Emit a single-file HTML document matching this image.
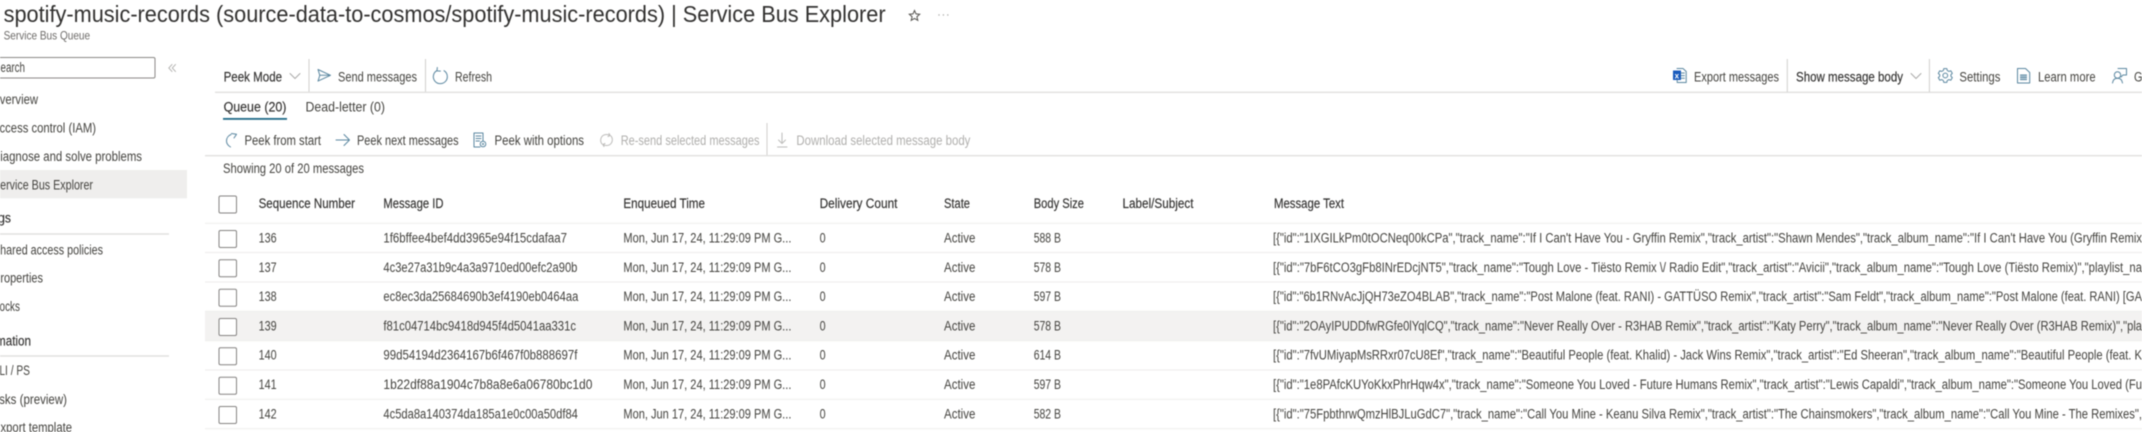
<!DOCTYPE html>
<html lang="en">
<head>
<meta charset="utf-8">
<title>Service Bus Explorer</title>
<style>
html,body{margin:0;padding:0;background:#fff;width:2142px;height:432px;overflow:hidden}
svg{display:block;position:absolute;left:0;top:0;filter:blur(.4px)}
text{font-family:"Liberation Sans",sans-serif;font-size:13.5px;fill:#44433f;white-space:pre}
.t{font-size:23px;fill:#323130}
.s{font-size:12px;fill:#6d6b69}
.h{fill:#323130;stroke:#323130;stroke-width:.15}
.d{fill:#b0afad}
.c{fill:#fff;stroke:#858382;stroke-width:1}
.l{stroke:#e1e0df;stroke-width:1.4;fill:none}
.r{stroke:#f0efee;stroke-width:1.2;fill:none}
.sep{stroke:#d0cfcd;stroke-width:1;fill:none}
.i{fill:none;stroke:#5b87a0;stroke-width:1;stroke-linecap:round;stroke-linejoin:round}
.g{fill:none;stroke:#bdbcba;stroke-width:1;stroke-linecap:round;stroke-linejoin:round}
.v{fill:none;stroke:#a8a7a5;stroke-width:.9;stroke-linecap:round;stroke-linejoin:round}
</style>
</head>
<body>
<svg xmlns="http://www.w3.org/2000/svg" width="2142" height="432" viewBox="0 0 2142 432">
<rect width="2142" height="432" fill="#fff"/>

<!-- Header -->
<text class="t" x="3.6" y="22" textLength="882" lengthAdjust="spacingAndGlyphs">spotify-music-records (source-data-to-cosmos/spotify-music-records) | Service Bus Explorer</text>
<text class="s" x="3.6" y="39.5" textLength="86.5" lengthAdjust="spacingAndGlyphs">Service Bus Queue</text>
<path d="M914.5 10.5l1.5 3.4 3.7.4-2.8 2.4.9 3.6-3.3-1.9-3.3 1.9.9-3.6-2.8-2.4 3.7-.4z" fill="none" stroke="#55534f" stroke-width="1"/>
<g fill="#a8a7a5"><circle cx="939" cy="15" r=".7"/><circle cx="943.4" cy="15" r=".7"/><circle cx="947.8" cy="15" r=".7"/></g>

<!-- Sidebar -->
<rect x="-3" y="57.5" width="158" height="20.5" rx="1.5" fill="#fff" stroke="#8a8886" stroke-width="1"/>
<text x="-6" y="72" textLength="31" lengthAdjust="spacingAndGlyphs">Search</text>
<path class="v" d="M172 64.5l-3.2 3.5 3.2 3.5M175.500 64.500l-3.200 3.500 3.200 3.500"/>
<rect x="0" y="170" width="187" height="28.3" fill="#efeeed"/>
<text x="-9" y="104" textLength="47" lengthAdjust="spacingAndGlyphs">Overview</text>
<text x="-8" y="132.500" textLength="104" lengthAdjust="spacingAndGlyphs">Access control (IAM)</text>
<text x="-8" y="161" textLength="150" lengthAdjust="spacingAndGlyphs">Diagnose and solve problems</text>
<text x="-7" y="189.500" textLength="100" lengthAdjust="spacingAndGlyphs">Service Bus Explorer</text>
<text class="h" x="-33" y="222.500" textLength="44" lengthAdjust="spacingAndGlyphs">Settings</text>
<line class="l" x1="0" y1="234" x2="169" y2="234"/>
<text x="-7" y="254.500" textLength="110" lengthAdjust="spacingAndGlyphs">Shared access policies</text>
<text x="-7" y="282.500" textLength="50" lengthAdjust="spacingAndGlyphs">Properties</text>
<text x="-6" y="311" textLength="26" lengthAdjust="spacingAndGlyphs">Locks</text>
<text class="h" x="-28" y="345.500" textLength="59" lengthAdjust="spacingAndGlyphs">Automation</text>
<line class="l" x1="0" y1="356" x2="169" y2="356"/>
<text x="-8" y="375" textLength="38" lengthAdjust="spacingAndGlyphs">CLI / PS</text>
<text x="-13" y="404" textLength="80" lengthAdjust="spacingAndGlyphs">Tasks (preview)</text>
<text x="-7" y="432" textLength="79" lengthAdjust="spacingAndGlyphs">Export template</text>

<!-- Top command bar -->
<text x="223.600" y="81.500" textLength="58.500" lengthAdjust="spacingAndGlyphs" class="h">Peek Mode</text>
<path class="v" d="M290 73.500l5 5 5-5"/>
<line class="sep" x1="309" y1="59" x2="309" y2="92"/>
<path class="i" d="M318 69.500l12.500 5.800-12.500 5.800 1.800-5.800zM319.800 75.300h10.700"/>
<text x="338" y="81.500" textLength="79" lengthAdjust="spacingAndGlyphs">Send messages</text>
<line class="sep" x1="425.500" y1="59" x2="425.500" y2="92"/>
<path class="i" d="M437 70.500a7 7 0 1 0 7 .2M437.300 67.500l-.3 3.400 3.400.2"/>
<text x="455" y="81.500" textLength="37" lengthAdjust="spacingAndGlyphs">Refresh</text>
<line class="l" x1="215" y1="92.300" x2="2142" y2="92.300"/>

<rect x="1673" y="70.500" width="8" height="9.500" fill="#185abd"/>
<text x="1674.600" y="78.600" style="font-size:8px;font-weight:bold;fill:#fff">x</text>
<path class="i" d="M1677 68.500h6l3.200 3v11h-9v-2.500M1681 73h3.400M1681 75.600h3.400M1681 78.200h3.400"/>
<text x="1694" y="81.500" textLength="85" lengthAdjust="spacingAndGlyphs">Export messages</text>
<line class="sep" x1="1787.300" y1="59" x2="1787.300" y2="92"/>
<text class="h" x="1796" y="81.500" textLength="107" lengthAdjust="spacingAndGlyphs">Show message body</text>
<path class="v" d="M1911 73.500l5 5 5-5"/>
<line class="sep" x1="1929.400" y1="59" x2="1929.400" y2="92"/>
<circle class="i" cx="1945.300" cy="75.500" r="2.400"/>
<path class="i" d="M1943.800 68.600h3l.5 1.900 1.600.9 1.900-.6 1.500 2.600-1.400 1.300v1.600l1.400 1.300-1.500 2.600-1.900-.6-1.600.9-.5 1.900h-3l-.5-1.900-1.600-.9-1.900.6-1.500-2.600 1.400-1.300v-1.600l-1.400-1.300 1.500-2.600 1.900.6 1.600-.9z"/>
<text x="1959.400" y="81.500" textLength="41" lengthAdjust="spacingAndGlyphs">Settings</text>
<rect x="2020" y="74.500" width="7" height="5.500" fill="#b9cdd9"/>
<path class="i" d="M2017.500 68.500h8l4.200 4v10.500h-12.200zM2020.500 75h6M2020.500 77.300h6M2020.500 79.600h6"/>
<text x="2038" y="81.500" textLength="57.600" lengthAdjust="spacingAndGlyphs">Learn more</text>
<circle class="i" cx="2117.500" cy="75" r="3.200"/>
<path class="i" d="M2112.500 83c.4-3.200 2.200-4.800 5-4.800s4.600 1.600 5 4.800M2118 68.500h8.500v6.500h-3.500l-2 2"/>
<text x="2134" y="81.500" textLength="70" lengthAdjust="spacingAndGlyphs">Give feedback</text>

<!-- Tabs -->
<text class="h" x="223.600" y="111.500" textLength="62.800" lengthAdjust="spacingAndGlyphs">Queue (20)</text>
<text x="305.500" y="111.500" textLength="79.500" lengthAdjust="spacingAndGlyphs">Dead-letter (0)</text>
<rect x="223" y="118" width="64" height="1.800" fill="#1f6a88"/>

<!-- Secondary command bar -->
<path class="i" d="M231 134.500a7 7 0 0 0-4.500 6.500c0 2.500 1.500 4.500 4 6M231.500 133.500l5 .8-2.500 3.700"/>
<text x="244.500" y="145.200" textLength="76.500" lengthAdjust="spacingAndGlyphs">Peek from start</text>
<path class="i" d="M336 140h13.500M344 134.500l5.500 5.500-5.500 5.500"/>
<text x="357" y="145.200" textLength="101.600" lengthAdjust="spacingAndGlyphs">Peek next messages</text>
<path class="i" d="M474 133h9v8M474 133v14h6M476 136h5M476 138.500h5M476 141h3.500"/>
<circle class="i" cx="483" cy="144" r="2.800"/>
<circle cx="483" cy="144" r="1" fill="#5b87a0"/>
<text x="494.500" y="145.200" textLength="89.500" lengthAdjust="spacingAndGlyphs">Peek with options</text>
<path class="g" d="M602 144a6 6 0 0 1 1-8.500c2-1.400 5-1.400 7 0M611 136a6 6 0 0 1-1 8.500c-2 1.400-5 1.400-7 0M609 133.500l1.200 2-2.200 1M604 146.500l-1.200-2 2.200-1"/>
<text class="d" x="620.700" y="145.200" textLength="138.800" lengthAdjust="spacingAndGlyphs">Re-send selected messages</text>
<line class="sep" x1="767" y1="123" x2="767" y2="155"/>
<path class="g" d="M782 133v10.500M778.500 140l3.500 3.500 3.500-3.500M777.500 147h9.500"/>
<text class="d" x="796.400" y="145.200" textLength="174" lengthAdjust="spacingAndGlyphs">Download selected message body</text>
<line class="l" x1="205" y1="155.700" x2="2142" y2="155.700"/>

<text x="223" y="173" textLength="141" lengthAdjust="spacingAndGlyphs">Showing 20 of 20 messages</text>

<!-- Table header -->
<rect class="c" x="219" y="196" width="17.500" height="17" rx="1.500"/>
<text class="h" x="258.600" y="208" textLength="96.400" lengthAdjust="spacingAndGlyphs">Sequence Number</text>
<text class="h" x="383.400" y="208" textLength="60.100" lengthAdjust="spacingAndGlyphs">Message ID</text>
<text class="h" x="623.400" y="208" textLength="81.600" lengthAdjust="spacingAndGlyphs">Enqueued Time</text>
<text class="h" x="819.600" y="208" textLength="77.900" lengthAdjust="spacingAndGlyphs">Delivery Count</text>
<text class="h" x="944" y="208" textLength="26" lengthAdjust="spacingAndGlyphs">State</text>
<text class="h" x="1033.700" y="208" textLength="50.300" lengthAdjust="spacingAndGlyphs">Body Size</text>
<text class="h" x="1122.500" y="208" textLength="71" lengthAdjust="spacingAndGlyphs">Label/Subject</text>
<text class="h" x="1274" y="208" textLength="70" lengthAdjust="spacingAndGlyphs">Message Text</text>

<!-- Rows -->
<rect x="205" y="311.500" width="1937" height="29" fill="#f3f2f1"/>
<line class="r" x1="205" y1="223.300" x2="2142" y2="223.300"/>
<line class="r" x1="205" y1="252.500" x2="2142" y2="252.500"/>
<line class="r" x1="205" y1="282" x2="2142" y2="282"/>
<line class="r" x1="205" y1="311.300" x2="2142" y2="311.300"/>
<line class="r" x1="205" y1="340.700" x2="2142" y2="340.700"/>
<line class="r" x1="205" y1="370" x2="2142" y2="370"/>
<line class="r" x1="205" y1="399.300" x2="2142" y2="399.300"/>
<line class="r" x1="205" y1="428.700" x2="2142" y2="428.700"/>

<rect class="c" x="219" y="230.500" width="17.500" height="17" rx="1.500"/>
<text x="258.600" y="242.500" textLength="18" lengthAdjust="spacingAndGlyphs">136</text>
<text x="383.400" y="242.500" textLength="183.600" lengthAdjust="spacingAndGlyphs">1f6bffee4bef4dd3965e94f15cdafaa7</text>
<text x="623.400" y="242.500" textLength="168" lengthAdjust="spacingAndGlyphs">Mon, Jun 17, 24, 11:29:09 PM G...</text>
<text x="819.600" y="242.500" textLength="6" lengthAdjust="spacingAndGlyphs">0</text>
<text x="944" y="242.500" textLength="31.400" lengthAdjust="spacingAndGlyphs">Active</text>
<text x="1033.700" y="242.500" textLength="27.300" lengthAdjust="spacingAndGlyphs">588 B</text>
<text x="1273" y="242.500" textLength="869" lengthAdjust="spacingAndGlyphs">[{"id":"1IXGILkPm0tOCNeq00kCPa","track_name":"If I Can't Have You - Gryffin Remix","track_artist":"Shawn Mendes","track_album_name":"If I Can't Have You (Gryffin Remix</text>

<rect class="c" x="219" y="259.800" width="17.500" height="17" rx="1.500"/>
<text x="258.600" y="271.800" textLength="18" lengthAdjust="spacingAndGlyphs">137</text>
<text x="383.400" y="271.800" textLength="194" lengthAdjust="spacingAndGlyphs">4c3e27a31b9c4a3a9710ed00efc2a90b</text>
<text x="623.400" y="271.800" textLength="168" lengthAdjust="spacingAndGlyphs">Mon, Jun 17, 24, 11:29:09 PM G...</text>
<text x="819.600" y="271.800" textLength="6" lengthAdjust="spacingAndGlyphs">0</text>
<text x="944" y="271.800" textLength="31.400" lengthAdjust="spacingAndGlyphs">Active</text>
<text x="1033.700" y="271.800" textLength="27.300" lengthAdjust="spacingAndGlyphs">578 B</text>
<text x="1273" y="271.800" textLength="869" lengthAdjust="spacingAndGlyphs">[{"id":"7bF6tCO3gFb8INrEDcjNT5","track_name":"Tough Love - Tiësto Remix \/ Radio Edit","track_artist":"Avicii","track_album_name":"Tough Love (Tiësto Remix)","playlist_na</text>

<rect class="c" x="219" y="289.200" width="17.500" height="17" rx="1.500"/>
<text x="258.600" y="301.100" textLength="18" lengthAdjust="spacingAndGlyphs">138</text>
<text x="383.400" y="301.100" textLength="194.900" lengthAdjust="spacingAndGlyphs">ec8ec3da25684690b3ef4190eb0464aa</text>
<text x="623.400" y="301.100" textLength="168" lengthAdjust="spacingAndGlyphs">Mon, Jun 17, 24, 11:29:09 PM G...</text>
<text x="819.600" y="301.100" textLength="6" lengthAdjust="spacingAndGlyphs">0</text>
<text x="944" y="301.100" textLength="31.400" lengthAdjust="spacingAndGlyphs">Active</text>
<text x="1033.700" y="301.100" textLength="27.300" lengthAdjust="spacingAndGlyphs">597 B</text>
<text x="1273" y="301.100" textLength="869" lengthAdjust="spacingAndGlyphs">[{"id":"6b1RNvAcJjQH73eZO4BLAB","track_name":"Post Malone (feat. RANI) - GATTÜSO Remix","track_artist":"Sam Feldt","track_album_name":"Post Malone (feat. RANI) [GA</text>

<rect class="c" x="219" y="318.500" width="17.500" height="17" rx="1.500"/>
<text x="258.600" y="330.400" textLength="18" lengthAdjust="spacingAndGlyphs">139</text>
<text x="383.400" y="330.400" textLength="192.600" lengthAdjust="spacingAndGlyphs">f81c04714bc9418d945f4d5041aa331c</text>
<text x="623.400" y="330.400" textLength="168" lengthAdjust="spacingAndGlyphs">Mon, Jun 17, 24, 11:29:09 PM G...</text>
<text x="819.600" y="330.400" textLength="6" lengthAdjust="spacingAndGlyphs">0</text>
<text x="944" y="330.400" textLength="31.400" lengthAdjust="spacingAndGlyphs">Active</text>
<text x="1033.700" y="330.400" textLength="27.300" lengthAdjust="spacingAndGlyphs">578 B</text>
<text x="1273" y="330.400" textLength="869" lengthAdjust="spacingAndGlyphs">[{"id":"2OAyIPUDDfwRGfe0lYqlCQ","track_name":"Never Really Over - R3HAB Remix","track_artist":"Katy Perry","track_album_name":"Never Really Over (R3HAB Remix)","pla</text>

<rect class="c" x="219" y="347.800" width="17.500" height="17" rx="1.500"/>
<text x="258.600" y="359.700" textLength="18" lengthAdjust="spacingAndGlyphs">140</text>
<text x="383.400" y="359.700" textLength="194" lengthAdjust="spacingAndGlyphs">99d54194d2364167b6f467f0b888697f</text>
<text x="623.400" y="359.700" textLength="168" lengthAdjust="spacingAndGlyphs">Mon, Jun 17, 24, 11:29:09 PM G...</text>
<text x="819.600" y="359.700" textLength="6" lengthAdjust="spacingAndGlyphs">0</text>
<text x="944" y="359.700" textLength="31.400" lengthAdjust="spacingAndGlyphs">Active</text>
<text x="1033.700" y="359.700" textLength="27.300" lengthAdjust="spacingAndGlyphs">614 B</text>
<text x="1273" y="359.700" textLength="869" lengthAdjust="spacingAndGlyphs">[{"id":"7fvUMiyapMsRRxr07cU8Ef","track_name":"Beautiful People (feat. Khalid) - Jack Wins Remix","track_artist":"Ed Sheeran","track_album_name":"Beautiful People (feat. K</text>

<rect class="c" x="219" y="377.200" width="17.500" height="17" rx="1.500"/>
<text x="258.600" y="389" textLength="18" lengthAdjust="spacingAndGlyphs">141</text>
<text x="383.400" y="389" textLength="209" lengthAdjust="spacingAndGlyphs">1b22df88a1904c7b8a8e6a06780bc1d0</text>
<text x="623.400" y="389" textLength="168" lengthAdjust="spacingAndGlyphs">Mon, Jun 17, 24, 11:29:09 PM G...</text>
<text x="819.600" y="389" textLength="6" lengthAdjust="spacingAndGlyphs">0</text>
<text x="944" y="389" textLength="31.400" lengthAdjust="spacingAndGlyphs">Active</text>
<text x="1033.700" y="389" textLength="27.300" lengthAdjust="spacingAndGlyphs">597 B</text>
<text x="1273" y="389" textLength="869" lengthAdjust="spacingAndGlyphs">[{"id":"1e8PAfcKUYoKkxPhrHqw4x","track_name":"Someone You Loved - Future Humans Remix","track_artist":"Lewis Capaldi","track_album_name":"Someone You Loved (Fu</text>

<rect class="c" x="219" y="406.500" width="17.500" height="17" rx="1.500"/>
<text x="258.600" y="418.300" textLength="18" lengthAdjust="spacingAndGlyphs">142</text>
<text x="383.400" y="418.300" textLength="194.500" lengthAdjust="spacingAndGlyphs">4c5da8a140374da185a1e0c00a50df84</text>
<text x="623.400" y="418.300" textLength="168" lengthAdjust="spacingAndGlyphs">Mon, Jun 17, 24, 11:29:09 PM G...</text>
<text x="819.600" y="418.300" textLength="6" lengthAdjust="spacingAndGlyphs">0</text>
<text x="944" y="418.300" textLength="31.400" lengthAdjust="spacingAndGlyphs">Active</text>
<text x="1033.700" y="418.300" textLength="27.300" lengthAdjust="spacingAndGlyphs">582 B</text>
<text x="1273" y="418.300" textLength="869" lengthAdjust="spacingAndGlyphs">[{"id":"75FpbthrwQmzHlBJLuGdC7","track_name":"Call You Mine - Keanu Silva Remix","track_artist":"The Chainsmokers","track_album_name":"Call You Mine - The Remixes",</text>
</svg>
</body>
</html>
